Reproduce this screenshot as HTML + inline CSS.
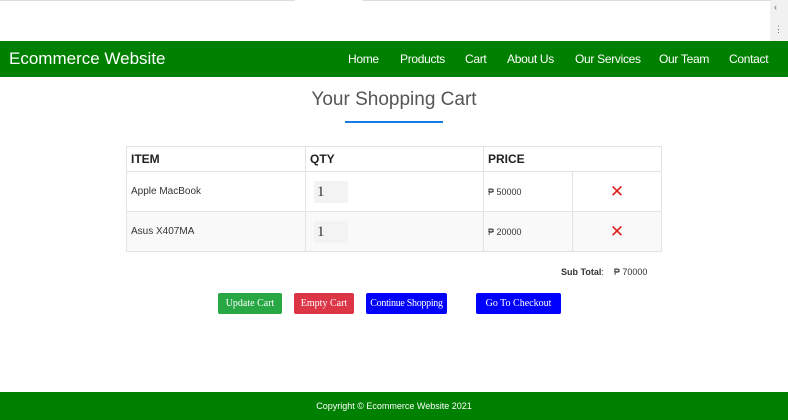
<!DOCTYPE html>
<html><head><meta charset="utf-8"><style>
*{margin:0;padding:0;box-sizing:border-box}
body{width:788px;height:420px;position:relative;background:#fff;font-family:"Liberation Sans",sans-serif;overflow:hidden}
.a{position:absolute}
.nav{top:41px;left:0;width:788px;height:36px;background:#008000;color:#fff}
.nav span{position:absolute;top:11px;font-size:12px;letter-spacing:-0.3px}
td{border:1px solid #e3e3e3;font-size:10px;color:#333;padding-left:4px}
.btn{position:absolute;top:293px;height:21px;color:#fff;font-family:"Liberation Serif",serif;font-size:10px;display:flex;align-items:center;justify-content:center;border-radius:2px;white-space:nowrap}
.x{color:#d22;font-size:17px;text-align:center;padding:0}
.q{display:inline-block;width:34px;height:22px;background:#f3f3f3;font-family:"Liberation Serif",serif;font-size:15px;line-height:22px;padding-left:3px;margin-left:4px}
</style></head><body>
<div class="a" style="top:0;left:0;width:295px;height:1px;background:#ddd"></div>
<div class="a" style="top:0;left:363px;width:410px;height:1px;background:#ddd"></div>
<div class="a" style="top:0;left:770px;width:18px;height:41px;background:#f1f1f1"></div>
<div class="a" style="top:2px;left:774px;font-size:9px;color:#666">‹</div>
<div class="a" style="top:24px;left:774px;font-size:9px;color:#666">⋮</div>
<div class="a nav">
<span style="left:9px;top:8px;font-size:17px;letter-spacing:0">Ecommerce Website</span>
<span style="left:348px">Home</span><span style="left:400px">Products</span><span style="left:465px">Cart</span><span style="left:507px">About Us</span><span style="left:575px">Our Services</span><span style="left:659px">Our Team</span><span style="left:729px">Contact</span>
</div>
<div class="a" style="top:89px;left:0;width:788px;text-align:center;font-size:19px;color:#555">Your Shopping Cart</div>
<div class="a" style="top:121px;left:345px;width:98px;height:2px;background:#1a7ae6"></div>
<table class="a" style="top:146px;left:126px;width:536px;border-collapse:collapse">
<tr style="height:25px"><td style="width:179px;font-weight:bold;font-size:12px;color:#222">ITEM</td><td style="width:178px;font-weight:bold;font-size:12px;color:#222">QTY</td><td colspan="2" style="font-weight:bold;font-size:12px;color:#222">PRICE</td></tr>
<tr style="height:40px"><td>Apple MacBook</td><td><span class="q">1</span></td><td style="width:89px;font-size:9px">₱ 50000</td><td class="x">✕</td></tr>
<tr style="height:40px;background:#f9f9f9"><td>Asus X407MA</td><td><span class="q">1</span></td><td style="font-size:9px">₱ 20000</td><td class="x">✕</td></tr>
</table>
<div class="a" style="top:267px;left:561px;font-size:9px;color:#333"><b>Sub Total</b>:&nbsp;&nbsp;&nbsp;&nbsp;₱ 70000</div>
<div class="btn" style="left:218px;width:64px;background:#28a745">Update Cart</div>
<div class="btn" style="left:294px;width:60px;background:#dc3545">Empty Cart</div>
<div class="btn" style="left:366px;width:81px;background:#0000ff;letter-spacing:-0.3px">Continue Shopping</div>
<div class="btn" style="left:476px;width:85px;background:#0000ff">Go To Checkout</div>
<div class="a" style="top:392px;left:0;width:788px;height:28px;background:#008000;color:#fff;font-size:9px;text-align:center;line-height:28px">Copyright © Ecommerce Website 2021</div>
</body></html>
